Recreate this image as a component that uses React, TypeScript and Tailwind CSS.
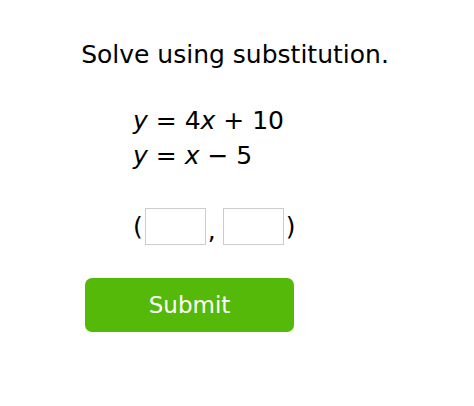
import React from "react";

export default function App() {
  return (
    <div
      className="w-[474px] h-[406px] bg-white text-black flex flex-col"
      style={{ fontFamily: '"DejaVu Sans", Verdana, sans-serif' }}
    >
      <div className="pt-[40px] text-center text-[25px] leading-[30px] pr-[4px]">Solve using substitution.</div>
      <div className="pl-[133px] mt-[33px] text-[25px] leading-[35px]">
        <div className="whitespace-pre">
          <i>y</i> = 4<i>x</i> + 10
        </div>
        <div className="whitespace-pre">
          <i>y</i> = <i>x</i> − 5
        </div>
      </div>
      <div className="pl-[133px] mt-[35px] flex items-center text-[25px] h-[37px]">
        <span>(</span>
        <div className="w-[61px] h-[37px] border border-[#cccccc] ml-[2px]" />
        <span className="ml-[2px] mt-[8px]">,</span>
        <div className="w-[61px] h-[37px] border border-[#cccccc] ml-[7px]" />
        <span className="ml-[2px]">)</span>
      </div>
      <div className="pl-[85px] mt-[33px]">
        <button className="w-[209px] h-[54px] rounded-[7px] bg-[#55b90a] text-white text-[23px]">
          Submit
        </button>
      </div>
    </div>
  );
}
